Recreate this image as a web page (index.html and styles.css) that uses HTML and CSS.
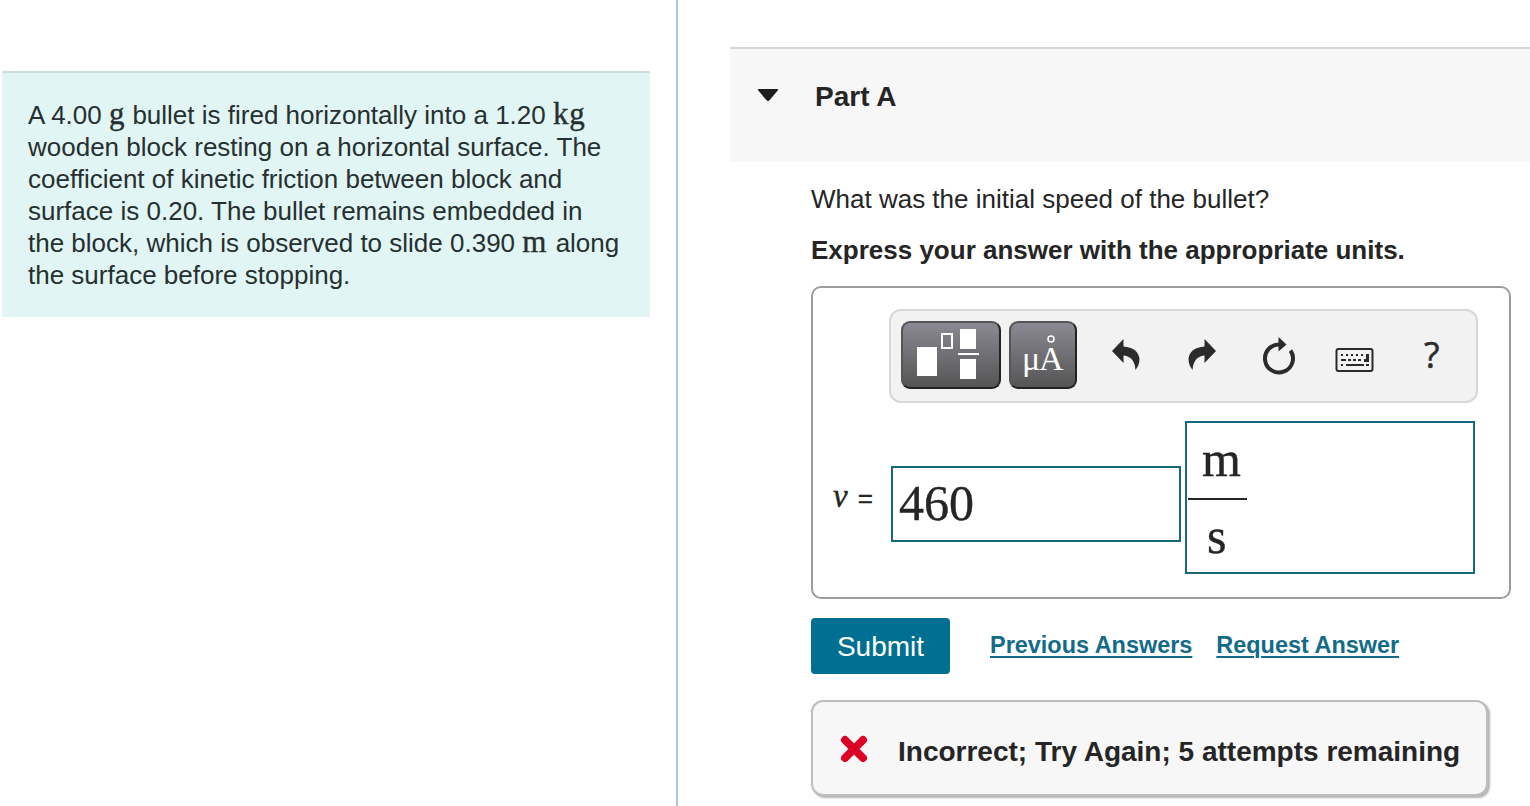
FILE: index.html
```
<!DOCTYPE html>
<html lang="en">
<head>
    <meta charset="UTF-8">
    <meta name="viewport" content="width=device-width, initial-scale=1.0">
    <title>Part A</title>
    <link rel="stylesheet" href="styles.css">
</head>
<body>
    <div class="page">
        <div class="left-panel">
            <div class="problem">
                A 4.00 <span class="unit">g</span> bullet is fired horizontally into a 1.20 <span class="unit">kg</span><br>
                wooden block resting on a horizontal surface. The<br>
                coefficient of kinetic friction between block and<br>
                surface is 0.20. The bullet remains embedded in<br>
                the block, which is observed to slide 0.390 <span class="unit unit-m">m</span> along<br>
                the surface before stopping.
            </div>
        </div>
        <div class="right-panel">
            <div class="part-header">
                <svg class="caret" width="22" height="13" viewBox="0 0 22 13"><path d="M2 0h18q2 0 .7 1.600l-8 9.500q-1.700 1.800-3.400 0l-8-9.500Q0 0 2 0z"/></svg>
                <h2>Part A</h2>
            </div>
            <div class="part-body">
                <p class="question">What was the initial speed of the bullet?</p>
                <p class="instructions">Express your answer with the appropriate units.</p>
                <div class="answer-box">
                    <div class="toolbar">
                        <button type="button" class="tool-btn template-btn" aria-label="Templates">
                            <svg width="96" height="64" viewBox="0 0 96 64">
                                <path fill="#fff" d="M14 24h20v29H14zM57 6h16v20H57zM57 36h16v20H57zM55 30h21v2H55z"/>
                                <path fill="none" stroke="#fff" stroke-width="2" d="M39 11h10v14H39z"/>
                            </svg>
                        </button>
                        <button type="button" class="tool-btn symbol-btn">
                            <svg width="64" height="64" viewBox="0 0 64 64">
                                <circle cx="40" cy="16" r="3" fill="none" stroke="#fff" stroke-width="1.500"/>
                                <text x="11" y="47">μ</text>
                                <text x="28" y="47">A</text>
                            </svg>
                        </button>
                        <button type="button" class="icon-btn undo" aria-label="Undo">
                            <svg width="28" height="32" viewBox="0 0 28 32"><path d="M0 12L11.500 0V7.500C21 8 27 13 27.500 20Q27.500 26 23.500 31Q23.500 26 21 22Q18 17 11.500 16.500V24z"/></svg>
                        </button>
                        <button type="button" class="icon-btn redo" aria-label="Redo">
                            <svg width="28" height="32" viewBox="0 0 28 32"><path d="M28 12L16.500 0V7.500C7 8 1 13 .5 20Q.5 26 4.500 31Q4.500 26 7 22Q10 17 16.500 16.500V24z"/></svg>
                        </button>
                        <button type="button" class="icon-btn reset" aria-label="Reset">
                            <svg width="34" height="38" viewBox="0 0 34 38">
                                <path fill="none" stroke="#2b2b2b" stroke-width="4" d="M18 7.500A14 14 0 1 0 28.500 13.500"/>
                                <path d="M16.500 0L24.500 7.500L16.500 14.500z"/>
                            </svg>
                        </button>
                        <button type="button" class="icon-btn keyboard" aria-label="Keyboard">
                            <svg width="40" height="24" viewBox="0 0 40 24">
                                <rect x="1.500" y="1" width="36" height="22" rx="2" fill="none" stroke="#2b2b2b" stroke-width="2"/>
                                <path d="M6 6h2v2H6zM11 6h2v2h-2zM16 6h2v2h-2zM21 6h2v2h-2zM26 6h2v2h-2zM31 6h3v8h-5v-3h2zM6 11h5v2H6zM13 11h3v2h-3zM18 11h3v2h-3zM23 11h3v2h-3zM6 16h2v2H6zM11 16h18v2H11zM31 16h3v2h-3z"/>
                            </svg>
                        </button>
                        <button type="button" class="icon-btn help">?</button>
                    </div>
                    <div class="answer-row">
                        <div class="variable"><i>v</i><span>=</span></div>
                        <div class="value-field">460</div>
                        <div class="unit-field">
                            <div class="fraction">
                                <span class="numerator">m</span>
                                <span class="denominator">s</span>
                            </div>
                        </div>
                    </div>
                </div>
                <div class="actions">
                    <button type="button" class="submit-btn">Submit</button>
                    <a href="#" class="previous">Previous Answers</a>
                    <a href="#" class="request">Request Answer</a>
                </div>
                <div class="feedback">
                    <svg width="28" height="28" viewBox="0 0 28 28"><path stroke="#dc0024" stroke-width="8" stroke-linecap="round" d="M5 5L23 23M23 5L5 23"/></svg>
                    <span>Incorrect; Try Again; 5 attempts remaining</span>
                </div>
            </div>
        </div>
    </div>
</body>
</html>
```
FILE: styles.css
```
* {
    box-sizing: border-box;
}
body {
    margin: 0;
    font-family: "Liberation Sans", Arial, sans-serif;
    font-size: 26px;
    line-height: 32px;
    color: #252525;
    background-color: #fff;
    overflow: hidden;
}
h2, p {
    margin: 0;
}
button {
    font-family: inherit;
    padding: 0;
    cursor: pointer;
}
svg {
    display: block;
}
.page {
    display: flex;
    height: 806px;
}
.left-panel {
    width: 678px;
    flex-shrink: 0;
    padding: 71px 26px 0 2px;
    border-right: 2px solid #a9c9d8;
}
.problem {
    height: 246px;
    padding: 26px;
    border-top: 2px solid #cfdddc;
    background-color: #e1f5f4;
    color: #263030;
    white-space: nowrap;
}
.unit {
    font-family: "Liberation Serif", serif;
    font-size: 31px;
    line-height: 20px;
    letter-spacing: 0.7px;
    -webkit-text-stroke: 0.4px #263030;
}
.unit-m {
    letter-spacing: 2px;
}
.right-panel {
    flex: 1;
    padding: 47px 0 0 52px;
}
.part-header {
    display: flex;
    height: 115px;
    padding: 32px 0 0 27px;
    border-top: 2px solid #d6d6d6;
    background-color: #f7f7f7;
}
.part-header h2 {
    margin-left: 36px;
    font-size: 28px;
    line-height: 32px;
}
.caret {
    margin-top: 8px;
    fill: #1d1d1d;
}
.part-body {
    padding: 21px 19px 0 81px;
    white-space: nowrap;
}
.instructions {
    margin-top: 19px;
    font-weight: bold;
}
.answer-box {
    width: 700px;
    height: 313px;
    margin-top: 20px;
    padding: 21px 31px 0 20px;
    border: 2px solid #9d9d9d;
    border-radius: 10px;
}
.toolbar {
    display: flex;
    height: 94px;
    margin-left: 56px;
    padding: 10px;
    border: 2px solid #d7d7d7;
    border-radius: 12px;
    background-color: #f2f2f2;
}
.tool-btn {
    height: 68px;
    border: 2px solid;
    border-color: #555 #222 #222 #555;
    border-radius: 9px;
    background: linear-gradient(#8b8992, #555);
    color: #fff;
}
.template-btn {
    width: 100px;
}
.symbol-btn {
    width: 68px;
    margin-left: 8px;
}
.symbol-btn text {
    font-family: "Liberation Serif", serif;
    font-size: 34px;
    fill: #fff;
}
.icon-btn {
    display: flex;
    border: none;
    background: none;
    fill: #2b2b2b;
    color: #2b2b2b;
}
.undo {
    margin: 18px 0 0 35px;
}
.redo {
    margin: 18px 0 0 48px;
}
.reset {
    margin: 16px 0 0 46px;
}
.keyboard {
    margin: 27px 0 0 39px;
}
.help {
    margin: 16px 0 0 49px;
    font-family: "Open Sans", sans-serif;
    font-size: 36px;
    line-height: 36px;
    -webkit-text-stroke: 0.5px #2b2b2b;
}
.answer-row {
    display: flex;
    margin-top: 18px;
}
.variable {
    width: 58px;
    padding-top: 61px;
    font-size: 26px;
}
.variable i {
    font-family: "Liberation Serif", serif;
    font-size: 33px;
    line-height: 20px;
    -webkit-text-stroke: 0.4px #252525;
}
.variable span {
    margin-left: 10px;
    -webkit-text-stroke: 0.4px #252525;
}
.value-field {
    width: 290px;
    height: 76px;
    margin-top: 45px;
    padding-left: 6px;
    border: 2px solid #16697a;
    font-family: "Liberation Serif", serif;
    font-size: 50px;
    line-height: 70px;
    -webkit-text-stroke: 0.4px #252525;
}
.unit-field {
    width: 290px;
    height: 153px;
    margin-left: 4px;
    padding-left: 1px;
    border: 2px solid #16697a;
    font-family: "Liberation Serif", serif;
    font-size: 50px;
    -webkit-text-stroke: 0.4px #252525;
}
.fraction {
    display: flex;
    flex-direction: column;
    width: 59px;
}
.numerator {
    height: 77px;
    padding-left: 14px;
    border-bottom: 2px solid #252525;
    line-height: 73px;
}
.denominator {
    padding-left: 19px;
    line-height: 72px;
}
.actions {
    display: flex;
    margin-top: 19px;
    font-size: 23.45px;
    font-weight: bold;
    line-height: 54px;
}
.submit-btn {
    width: 139px;
    height: 56px;
    padding-top: 2px;
    border: none;
    border-radius: 4px;
    background-color: #007092;
    color: #fff;
    font-size: 28px;
}
.actions a {
    color: #126b88;
    text-underline-offset: 3px;
    text-decoration-thickness: 2px;
}
.previous {
    margin-left: 40px;
}
.request {
    margin-left: 24px;
}
.feedback {
    display: flex;
    align-items: center;
    width: 677px;
    height: 96px;
    margin-top: 26px;
    padding: 7px 0 0 27px;
    border: 2px solid #bdbdbd;
    border-radius: 12px;
    background-color: #f7f7f7;
    box-shadow: 2px 2px 2px #b5b5b5;
    font-size: 28px;
    font-weight: bold;
}
.feedback svg {
    margin-top: -5px;
}
.feedback span {
    margin-left: 30px;
}
```
